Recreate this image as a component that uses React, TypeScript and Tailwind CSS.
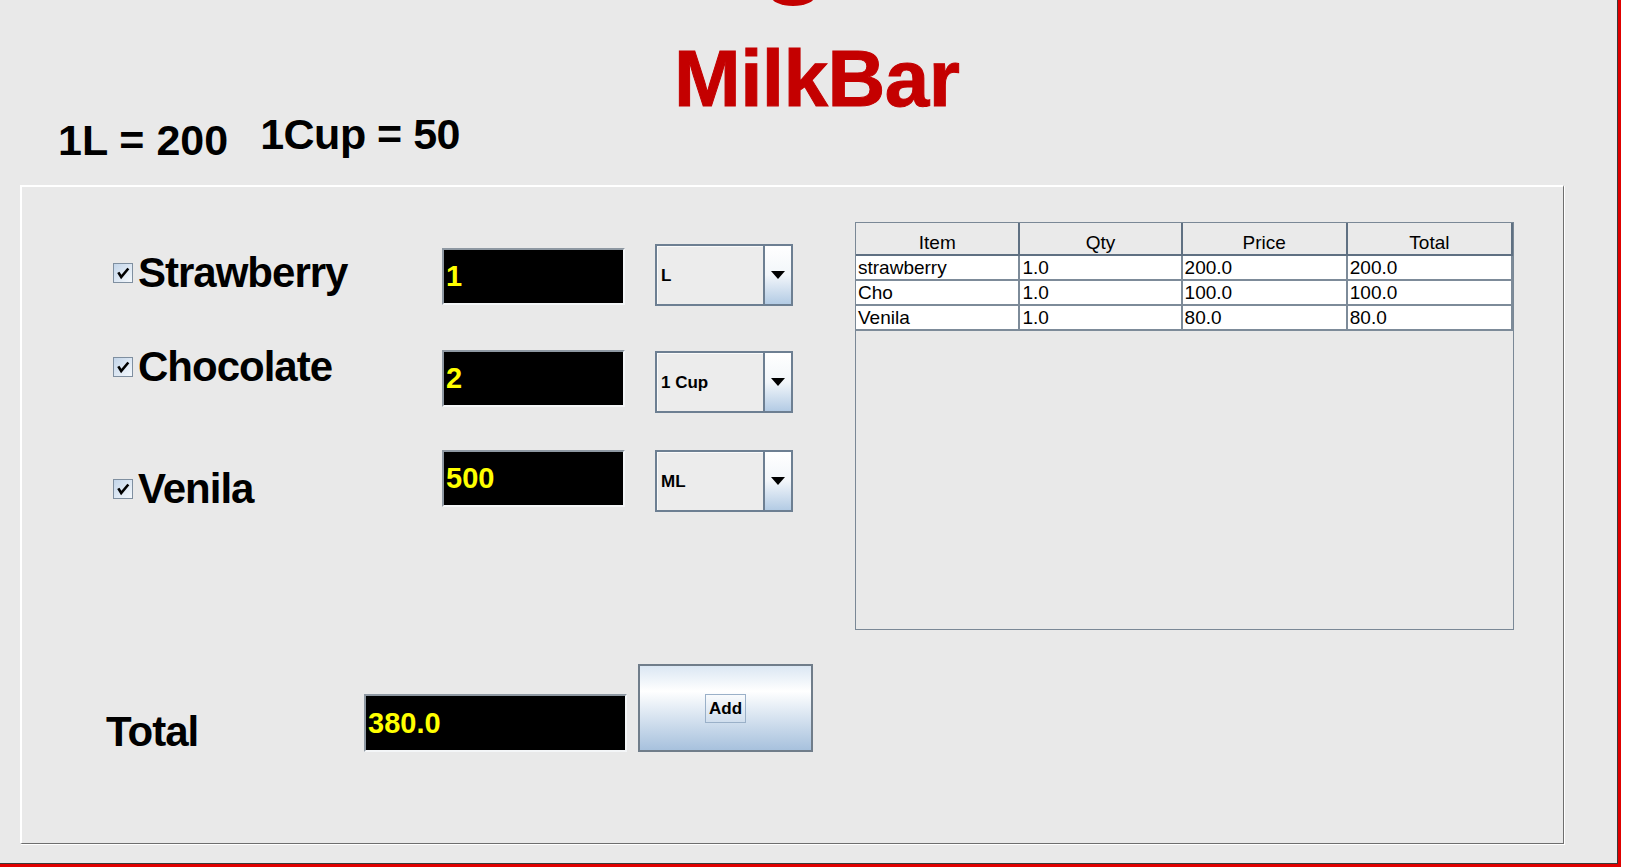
import React from "react";

const flavours = [
	{ name: "Strawberry", qty: "1", unit: "L", row: "h-[101px]", label: "mt-[8px]", field: "mt-[4px]", combo: "mt-0" },
	{ name: "Chocolate", qty: "2", unit: "1 Cup", row: "h-[105px]", label: "mt-[1px]", field: "mt-[5px]", combo: "mt-[6px]" },
	{ name: "Venila", qty: "500", unit: "ML", row: "h-[62px]", label: "mt-[18px]", field: "mt-0", combo: "mt-0" },
];

const orders = [
	["strawberry", "1.0", "200.0", "200.0"],
	["Cho", "1.0", "100.0", "100.0"],
	["Venila", "1.0", "80.0", "80.0"],
];

const colWidths = ["w-[164px]", "w-[163px]", "w-[166px]", "w-[166px]"];

function CheckBox() {
	return (
		<div className="w-[20px] h-[20px] shrink-0 border border-[#7f8fa0] bg-gradient-to-br from-[#c3d5e9] to-[#f4f8fc] flex items-center justify-center">
			<svg width="14" height="14" viewBox="0 0 14 14">
				<path d="M3 7.5 L5.2 11 L11.5 3.5" fill="none" stroke="#000" strokeWidth="2.6" strokeLinecap="square" />
			</svg>
		</div>
	);
}

function Field({ value, className }: { value: string; className: string }) {
	return (
		<div className={`bg-black border-2 border-t-[#8e98a2] border-l-[#8e98a2] border-r-[#f4f6f8] border-b-[#f4f6f8] flex items-center pl-[2px] text-[#ffff00] text-[29px] font-bold leading-none ${className}`}>
			{value}
		</div>
	);
}

function Combo({ value, className }: { value: string; className: string }) {
	return (
		<div className={`ml-[30px] w-[138px] h-[62px] border-2 border-[#6d7f92] flex ${className}`}>
			<div className="flex-1 bg-[#ececec] border-t border-l border-[#fafafa] flex items-center pl-[3px] text-[17px] font-bold text-black">
				{value}
			</div>
			<div className="w-[28px] border-l-2 border-[#6d7f92] bg-gradient-to-b from-[#ffffff] via-[#f2f6fa] to-[#b3cbe4] flex items-center justify-center">
				<svg width="14" height="8" viewBox="0 0 14 8">
					<path d="M0 0 H14 L7 8 Z" fill="#000" />
				</svg>
			</div>
		</div>
	);
}

export default function App() {
	return (
		<div className="w-[1635px] h-[867px] bg-white overflow-hidden font-['Liberation_Sans',Arial,sans-serif]">
			<div className="w-[1621px] h-[867px] bg-[#e9e9e9] border-r-[3px] border-b-[3px] border-[#e00000] shadow-[inset_-1px_-1px_0_#3a3a3a]">
				{/* Title area */}
				<div className="h-[185px] flex flex-col">
					<div className="ml-[771px] w-[44px] h-[6px] overflow-hidden">
						<div className="-mt-[14px] w-[44px] h-[20px] rounded-[50%] bg-[#c40000]" />
					</div>
					<div className="mt-[33px] h-[74px] pl-[674px] text-[80px] leading-none font-bold tracking-[-0.5px] text-[#c40000] [-webkit-text-stroke:1px_#c40000]">
						MilkBar
					</div>
					<div className="flex items-start">
						<span className="mt-[6px] ml-[58px] text-[43px] leading-none font-bold text-black">1L = 200</span>
						<span className="ml-[32px] text-[43px] leading-none font-bold tracking-[-0.5px] text-black">1Cup = 50</span>
					</div>
				</div>

				{/* Order panel */}
				<div className="ml-[20px] w-[1544px] h-[659px] border-t-2 border-l-2 border-r border-b border-t-white border-l-white border-r-[#6e6e6e] border-b-[#6e6e6e] shadow-[1px_1px_0_#ffffff] flex">
					<div className="w-[833px] pt-[57px] flex flex-col">
						{flavours.map((f) => (
							<div key={f.name} className={`flex items-start pl-[91px] ${f.row}`}>
								<div className={`w-[329px] flex items-center gap-[5px] ${f.label}`}>
									<CheckBox />
									<span className="text-[42px] leading-none font-bold tracking-[-1px] text-black">{f.name}</span>
								</div>
								<Field value={f.qty} className={`w-[183px] h-[57px] ${f.field}`} />
								<Combo value={f.unit} className={f.combo} />
							</div>
						))}

						<div className="mt-[152px] flex items-start pl-[84px]">
							<span className="mt-[47px] w-[258px] text-[42px] leading-none font-bold tracking-[-1px] text-black">Total</span>
							<Field value="380.0" className="mt-[30px] w-[263px] h-[58px]" />
							<button className="ml-[11px] w-[175px] h-[88px] border-2 border-[#707d8a] bg-gradient-to-b from-[#dbe7f3] via-[#ffffff] via-30% to-[#a7c1dd] flex items-center justify-center">
								<span className="border border-[#9ab0c8] px-[3px] py-[5px] text-[17px] leading-none font-bold text-black">Add</span>
							</button>
						</div>
					</div>

					<div className="pt-[35px]">
						<div className="w-[659px] h-[408px] border border-[#7a8896] bg-[#e9e9e9]">
							<table className="border-collapse table-fixed text-[19px] text-black">
								<thead>
									<tr className="h-[32px] bg-[#eaeaea]">
										{["Item", "Qty", "Price", "Total"].map((h, i) => (
											<th key={h} className={`${colWidths[i]} p-0 pb-[2px] align-bottom leading-none font-normal text-center border-r-2 border-b-2 border-[#5f7082]`}>
												{h}
											</th>
										))}
									</tr>
								</thead>
								<tbody>
									{orders.map((r) => (
										<tr key={r[0]} className="h-[25px] bg-white">
											{r.map((c, i) => (
												<td key={i} className="p-0 pl-[2px] leading-none border-r-2 border-b-2 border-[#7d8b99]">
													{c}
												</td>
											))}
										</tr>
									))}
								</tbody>
							</table>
						</div>
					</div>
				</div>
			</div>
		</div>
	);
}
